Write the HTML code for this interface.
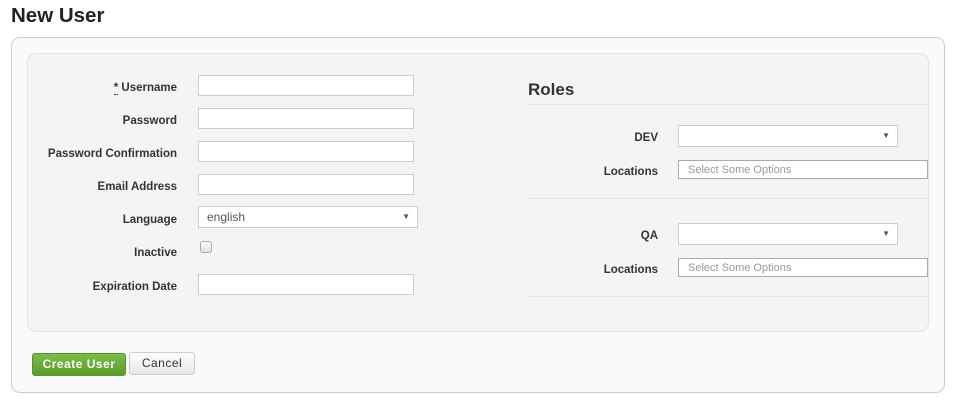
<!DOCTYPE html>
<html><head><style>
*{box-sizing:border-box;margin:0;padding:0}
body{width:953px;height:406px;background:#fff;font-family:"Liberation Sans",sans-serif;position:relative;overflow:hidden;color:#333}
.a{position:absolute}
h1{position:absolute;left:11px;top:4px;font-size:20.5px;font-weight:bold;color:#222}
.outer{left:11px;top:37px;width:934px;height:356px;border:1px solid #ccc;border-radius:9px;background:#fafafa}
.inner{left:27px;top:53px;width:902px;height:279px;border:1px solid #e2e2e2;border-radius:9px;background:#f4f4f4}
.lbl{position:absolute;font-size:11.5px;font-weight:bold;color:#333;text-align:right;white-space:nowrap}
.inp{position:absolute;background:#fff;border:1px solid #ccc;height:21px}
.sel{position:absolute;background:#fff;border:1px solid #ccc;height:22px;font-size:12px;color:#555;padding:3px 8px}
.sel:after{content:"▼";position:absolute;right:7px;top:5px;font-size:8px;color:#555}
.ms{position:absolute;background:#fff;border:1px solid #aaa;height:19px;font-size:11px;color:#999;padding:2px 9px}
.hr{position:absolute;height:1px;background:#e4e4e4}
.btn{position:absolute;height:23px;border-radius:3px;font-size:12px;letter-spacing:.5px;text-align:center;line-height:21px}
</style></head><body>
<h1>New User</h1>
<div class="a outer"></div>
<div class="a inner"></div>

<div class="lbl" style="right:776px;top:82px"><span style="border-bottom:1px dotted #333">*</span> Username</div>
<div class="inp" style="left:198px;top:75px;width:216px"></div>
<div class="lbl" style="right:776px;top:115px">Password</div>
<div class="inp" style="left:198px;top:108px;width:216px"></div>
<div class="lbl" style="right:776px;top:148px">Password Confirmation</div>
<div class="inp" style="left:198px;top:141px;width:216px"></div>
<div class="lbl" style="right:776px;top:181px">Email Address</div>
<div class="inp" style="left:198px;top:174px;width:216px"></div>
<div class="lbl" style="right:776px;top:214px">Language</div>
<div class="sel" style="left:198px;top:206px;width:220px">english</div>
<div class="lbl" style="right:776px;top:247px">Inactive</div>
<div class="a" style="left:200px;top:241px;width:12px;height:12px;border:1px solid #aaa;border-radius:3px;background:linear-gradient(#fff,#ddd)"></div>
<div class="lbl" style="right:776px;top:281px">Expiration Date</div>
<div class="inp" style="left:198px;top:274px;width:216px"></div>

<div class="a" style="left:528px;top:80px;font-size:17px;font-weight:bold;color:#333">Roles</div>
<div class="hr" style="left:528px;top:104px;width:400px"></div>
<div class="lbl" style="right:295px;top:132px">DEV</div>
<div class="sel" style="left:678px;top:125px;width:220px"></div>
<div class="lbl" style="right:295px;top:166px">Locations</div>
<div class="ms" style="left:678px;top:160px;width:250px;padding-top:3px">Select Some Options</div>
<div class="hr" style="left:528px;top:198px;width:400px"></div>
<div class="lbl" style="right:295px;top:230px">QA</div>
<div class="sel" style="left:678px;top:223px;width:220px"></div>
<div class="lbl" style="right:295px;top:264px">Locations</div>
<div class="ms" style="left:678px;top:258px;width:250px;padding-top:3px">Select Some Options</div>
<div class="hr" style="left:528px;top:296px;width:400px"></div>

<div class="btn" style="left:32px;top:353px;width:94px;background:linear-gradient(#7cbc48,#5b9b2b);border:1px solid #5a9030;color:#fff;font-weight:bold">Create User</div>
<div class="btn" style="left:129px;top:352px;width:66px;background:linear-gradient(#fff,#e6e6e6);border:1px solid #ccc;color:#333">Cancel</div>
</body></html>
